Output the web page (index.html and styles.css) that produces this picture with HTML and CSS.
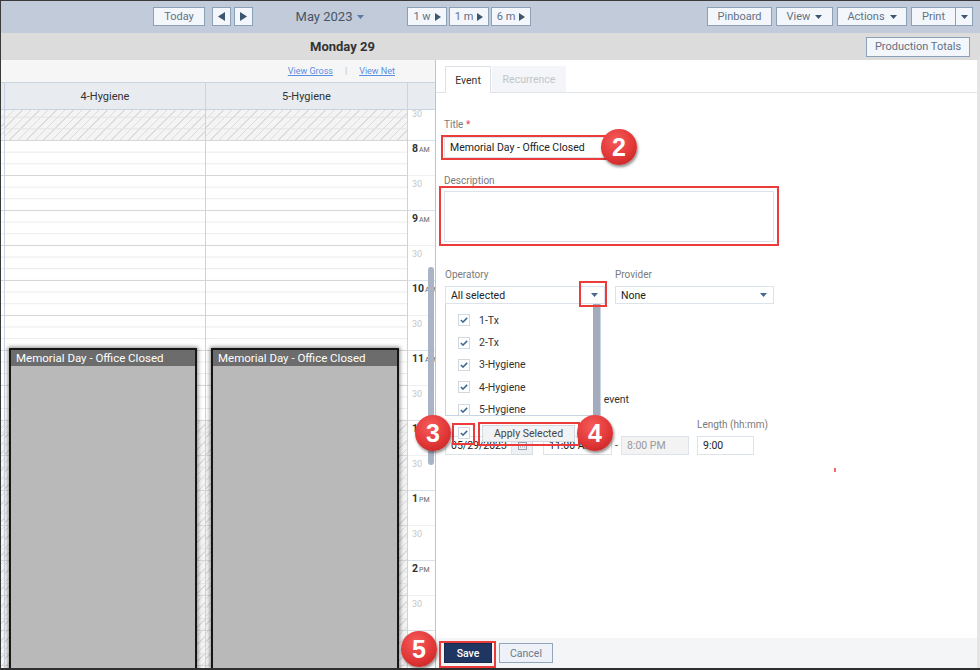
FILE: index.html
```html
<!DOCTYPE html>
<html>
<head>
  <meta charset="utf-8">
  <title>Schedule - Edit Event</title>
  <link rel="stylesheet" href="styles.css">
</head>
<body>
<div class="app">
  <div class="toolbar">
    <button type="button" class="btn today">Today</button>
    <button type="button" class="btn arrow prev"><svg width="7" height="9" viewBox="0 0 7 9"><path d="M7 0V9L0 4.5Z" fill="#3d5670"/></svg></button>
    <button type="button" class="btn arrow next"><svg width="7" height="9" viewBox="0 0 7 9"><path d="M0 0V9L7 4.5Z" fill="#3d5670"/></svg></button>
    <div class="month">May 2023 <svg width="7" height="4" viewBox="0 0 7 4"><path d="M0 0H7L3.5 4Z" fill="#5a7aa5"/></svg></div>
    <button type="button" class="btn range">1 w <svg width="6" height="8" viewBox="0 0 6 8"><path d="M0 0V8L6 4Z" fill="#3d5670"/></svg></button>
    <button type="button" class="btn range">1 m <svg width="6" height="8" viewBox="0 0 6 8"><path d="M0 0V8L6 4Z" fill="#3d5670"/></svg></button>
    <button type="button" class="btn range">6 m <svg width="6" height="8" viewBox="0 0 6 8"><path d="M0 0V8L6 4Z" fill="#3d5670"/></svg></button>
    <div class="spacer"></div>
    <button type="button" class="btn pinboard">Pinboard</button>
    <button type="button" class="btn view">View <svg width="7" height="4" viewBox="0 0 7 4"><path d="M0 0H7L3.5 4Z" fill="#3d5670"/></svg></button>
    <button type="button" class="btn actions">Actions <svg width="7" height="4" viewBox="0 0 7 4"><path d="M0 0H7L3.5 4Z" fill="#3d5670"/></svg></button>
    <button type="button" class="btn print">Print</button>
    <button type="button" class="btn print-caret"><svg width="7" height="4" viewBox="0 0 7 4"><path d="M0 0H7L3.5 4Z" fill="#3d5670"/></svg></button>
  </div>

  <div class="dayrow">
    <div class="dayname">Monday 29</div>
    <div class="spacer"></div>
    <button type="button" class="btn totals">Production Totals</button>
  </div>

  <div class="main">
    <div class="calendar">
      <div class="links">
        <a href="#">View Gross</a>
        <span class="sep">|</span>
        <a href="#">View Net</a>
      </div>
      <div class="colheads">
        <div class="stub"></div>
        <div class="colhead c1">4-Hygiene</div>
        <div class="colhead c2">5-Hygiene</div>
        <div class="colhead timehead"></div>
      </div>
      <div class="grid">
        <div class="col stub">
          <div class="seg closed top"></div>
          <div class="seg open"></div>
          <div class="seg closed rest"></div>
        </div>
        <div class="col c1">
          <div class="seg closed top"></div>
          <div class="seg open"></div>
          <div class="seg closed rest"></div>
          <div class="event">
            <div class="event-title">Memorial Day - Office Closed</div>
          </div>
        </div>
        <div class="col c2">
          <div class="seg closed top"></div>
          <div class="seg open"></div>
          <div class="seg closed rest"></div>
          <div class="event">
            <div class="event-title">Memorial Day - Office Closed</div>
          </div>
        </div>
        <div class="times">
          <div class="tslots">
            <div class="tslot half"><span class="min">30</span></div>
            <div class="tslot hour"><b>8</b><small>AM</small></div>
            <div class="tslot half"><span class="min">30</span></div>
            <div class="tslot hour"><b>9</b><small>AM</small></div>
            <div class="tslot half"><span class="min">30</span></div>
            <div class="tslot hour"><b>10</b><small>AM</small></div>
            <div class="tslot half"><span class="min">30</span></div>
            <div class="tslot hour"><b>11</b><small>AM</small></div>
            <div class="tslot half"><span class="min">30</span></div>
            <div class="tslot hour"><b>12</b><small>PM</small></div>
            <div class="tslot half"><span class="min">30</span></div>
            <div class="tslot hour"><b>1</b><small>PM</small></div>
            <div class="tslot half"><span class="min">30</span></div>
            <div class="tslot hour"><b>2</b><small>PM</small></div>
            <div class="tslot half"><span class="min">30</span></div>
            <div class="tslot hour"><b>3</b><small>PM</small></div>
            <div class="tslot half"><span class="min">30</span></div>
          </div>
          <div class="tscroll"></div>
        </div>
      </div>
    </div>

    <div class="panel">
      <div class="tabs">
        <div class="tab active">Event</div>
        <div class="tab off">Recurrence</div>
      </div>

      <div class="form">
        <label class="label first">Title <span class="req">*</span></label>
        <div class="input title-input">Memorial Day - Office Closed</div>

        <label class="label desc-label">Description</label>
        <div class="input textarea"></div>

        <div class="pair">
          <div class="field op-field">
            <label class="label">Operatory</label>
            <div class="select-wrap">
              <div class="input select">All selected <svg width="7" height="4" viewBox="0 0 7 4"><path d="M0 0H7L3.5 4Z" fill="#45698f"/></svg></div>
              <div class="dropdown">
                <div class="ddlist">
                  <div class="items">
                    <div class="item"><span class="cb"><svg width="8" height="6" viewBox="0 0 8 6"><path d="M0.8 3L3 5.1L7.2 0.9" fill="none" stroke="#3b6a97" stroke-width="1.5"/></svg></span>1-Tx</div>
                    <div class="item"><span class="cb"><svg width="8" height="6" viewBox="0 0 8 6"><path d="M0.8 3L3 5.1L7.2 0.9" fill="none" stroke="#3b6a97" stroke-width="1.5"/></svg></span>2-Tx</div>
                    <div class="item"><span class="cb"><svg width="8" height="6" viewBox="0 0 8 6"><path d="M0.8 3L3 5.1L7.2 0.9" fill="none" stroke="#3b6a97" stroke-width="1.5"/></svg></span>3-Hygiene</div>
                    <div class="item"><span class="cb"><svg width="8" height="6" viewBox="0 0 8 6"><path d="M0.8 3L3 5.1L7.2 0.9" fill="none" stroke="#3b6a97" stroke-width="1.5"/></svg></span>4-Hygiene</div>
                    <div class="item"><span class="cb"><svg width="8" height="6" viewBox="0 0 8 6"><path d="M0.8 3L3 5.1L7.2 0.9" fill="none" stroke="#3b6a97" stroke-width="1.5"/></svg></span>5-Hygiene</div>
                  </div>
                  <div class="ddscroll"></div>
                </div>
                <div class="ddfoot">
                  <span class="cb"><svg width="8" height="6" viewBox="0 0 8 6"><path d="M0.8 3L3 5.1L7.2 0.9" fill="none" stroke="#3b6a97" stroke-width="1.5"/></svg></span>
                  <button type="button" class="apply">Apply Selected</button>
                </div>
              </div>
            </div>
          </div>
          <div class="field prov-field">
            <label class="label">Provider</label>
            <div class="input select">None <svg width="7" height="4" viewBox="0 0 7 4"><path d="M0 0H7L3.5 4Z" fill="#45698f"/></svg></div>
          </div>
        </div>

        <div class="allday">
          <span class="cb"></span>
          <span>Make this an all-day event</span>
        </div>

        <div class="when">
          <div class="fcol date-col">
            <div class="label">&nbsp;</div>
            <div class="date-group">
              <div class="input small date">05/29/2023</div>
              <div class="calbtn"><svg width="9" height="8" viewBox="0 0 9 8"><rect x="0.5" y="0.5" width="8" height="7" fill="none" stroke="#9aa3ad"/><path d="M2 3H3M4 3H5M6 3H7M2 5H3M4 5H5M6 5H7" stroke="#9aa3ad"/></svg></div>
            </div>
          </div>
          <div class="fcol start-col">
            <div class="label">&nbsp;</div>
            <div class="input small">11:00 AM</div>
          </div>
          <div class="fcol dash-col">
            <div class="label">&nbsp;</div>
            <div class="dash">-</div>
          </div>
          <div class="fcol end-col">
            <div class="label">&nbsp;</div>
            <div class="input small disabled">8:00 PM</div>
          </div>
          <div class="fcol len-col">
            <label class="label">Length (hh:mm)</label>
            <div class="input small">9:00</div>
          </div>
        </div>
      </div>

      <div class="footer">
        <button type="button" class="save">Save</button>
        <button type="button" class="cancel">Cancel</button>
      </div>
    </div>
  </div>

  <!-- screenshot callouts -->
  <div class="annot a-title"></div>
  <div class="annot a-desc"></div>
  <div class="annot a-caret"></div>
  <div class="annot a-all"></div>
  <div class="annot a-apply"></div>
  <div class="annot a-save"></div>
  <div class="mark"></div>
  <div class="badge b2">2</div>
  <div class="badge b3">3</div>
  <div class="badge b4">4</div>
  <div class="badge b5">5</div>
</div>
</body>
</html>
```

FILE: styles.css
```css
html, body {
  margin: 0;
  padding: 0;
}
body {
  width: 980px;
  height: 670px;
  overflow: hidden;
  background: #fff;
  color: #333;
  font-family: Roboto, 'Liberation Sans', sans-serif;
}
.app {
  position: relative;
  width: 980px;
  height: 670px;
  overflow: hidden;
  background: #2e2e2e;
}
/* window frame */
.app::after {
  content: "";
  position: absolute;
  top: 0; left: 0; right: 0; bottom: 0;
  border-top: 1px solid #3a3a3a;
  border-left: 1px solid #3a3a3a;
  border-bottom: 2px solid #2e2e2e;
  pointer-events: none;
  z-index: 20;
}
.spacer {
  flex: 1;
}
.btn {
  box-sizing: border-box;
  height: 19px;
  padding: 0;
  border: 1px solid #8aa1b7;
  background: #f3f6fb;
  color: #627284;
  font-family: inherit;
  font-size: 11px;
  display: inline-flex;
  align-items: center;
  justify-content: center;
  gap: 5px;
}

/* Top toolbar */
.toolbar {
  display: flex;
  align-items: center;
  height: 33px;
  background: #c2cbda;
}
.today { width: 52px; margin-left: 153px; }
.arrow { width: 19px; }
.prev { margin-left: 7px; }
.next { margin-left: 3px; }
.month {
  width: 154px;
  display: flex;
  justify-content: center;
  align-items: center;
  gap: 5px;
  font-size: 13px;
  color: #465566;
}
.range { width: 40px; gap: 4px; }
.range + .range { margin-left: 2px; }
.pinboard { width: 65px; }
.view { width: 57px; margin-left: 4px; }
.actions { width: 70px; margin-left: 4px; }
.print { width: 45px; margin-left: 4px; }
.print-caret { width: 18px; margin-left: -1px; margin-right: 7px; }

.dayrow {
  display: flex;
  align-items: center;
  height: 27px;
  background: #dcdcdc;
}
.dayname {
  padding-left: 310px;
  font-size: 13px;
  font-weight: bold;
  color: #333;
}
.totals { width: 104px; height: 20px; margin-right: 10px; }

.main {
  display: flex;
  height: 608px;
  background: #fff;
}

/* Calendar */
.calendar {
  width: 435px;
  flex: none;
  display: flex;
  flex-direction: column;
}
.links {
  box-sizing: border-box;
  height: 22px;
  display: flex;
  justify-content: flex-end;
  align-items: center;
  gap: 12px;
  padding-right: 40px;
  background: #f6f6f6;
  font-size: 9px;
}
.links a {
  color: #5b8de0;
}
.links .sep {
  color: #bbb;
}
.colheads {
  box-sizing: border-box;
  height: 28px;
  display: flex;
  background: #e8ecf1;
  border-top: 1px solid #c8d4e0;
  border-bottom: 1px solid #c8d4e0;
}
.stub { width: 4px; flex: none; }
.c1 { width: 201px; flex: none; }
.c2 { width: 202px; flex: none; }
.colhead {
  box-sizing: border-box;
  border-left: 1px solid #c8d4e0;
  display: flex;
  align-items: center;
  justify-content: center;
  font-size: 11px;
  color: #333;
}
.timehead { width: 28px; flex: none; }

.grid {
  flex: 1;
  display: flex;
  overflow: hidden;
}
.col {
  box-sizing: border-box;
  position: relative;
  display: flex;
  flex-direction: column;
}
.col.c1, .col.c2 {
  border-left: 1px solid #c8d4e0;
}
.seg {
  background:
    linear-gradient(#d7d7d7 1px, transparent 1px) 0 0 / 100% 35px,
    linear-gradient(#ebebeb 1px, transparent 1px) 0 0 / 100% 11.6667px,
    #fff;
}
.seg.closed {
  background:
    linear-gradient(#d7d7d7 1px, transparent 1px) 0 0 / 100% 35px,
    linear-gradient(#e4e4e4 1px, transparent 1px) 0 0 / 100% 11.6667px,
    repeating-linear-gradient(135deg, #dcdcdc 0 1px, #f4f4f4 1px 6px);
}
.seg.top {
  height: 30px;
  flex: none;
  background-position: 0 30px, 0 30px, 0 0;
}
.seg.open {
  height: 280px;
  flex: none;
}
.seg.rest {
  flex: 1;
}
.event {
  position: absolute;
  top: 238px;
  bottom: -20px;
  width: 188px;
  box-sizing: border-box;
  border: 2px solid #161616;
  background: #b9b9b9;
  box-shadow: 0 0 4px 1px rgba(0, 0, 0, 0.45);
}
.c1 .event { left: 4px; }
.c2 .event { left: 5px; }
.event-title {
  height: 16px;
  line-height: 16px;
  padding-left: 5px;
  background: #6c6c6c;
  color: #fff;
  font-size: 11.5px;
  white-space: nowrap;
}

.times {
  width: 28px;
  flex: none;
  box-sizing: border-box;
  position: relative;
  border-left: 1px solid #c8d4e0;
  overflow: hidden;
}
.tslots {
  margin-top: -5px;
}
.tslot {
  box-sizing: border-box;
  height: 35px;
  padding: 0 0 0 4px;
  line-height: 11px;
  white-space: nowrap;
}
.tslot.hour {
  border-top: 1px solid #d9e1ea;
}
.tslot.half {
  border-top: 1px solid #f0f0f0;
}
.tslot b {
  font-size: 10.5px;
  color: #333;
}
.tslot small {
  font-size: 7px;
  color: #666;
  margin-left: 1px;
}
.tslot .min {
  font-size: 9px;
  color: #c6c6c6;
}
.tscroll {
  position: absolute;
  left: 20px;
  top: 157px;
  width: 6px;
  height: 198px;
  border-radius: 3px;
  background: #a9b4c7;
}

/* Event panel */
.panel {
  flex: 1;
  box-sizing: border-box;
  display: flex;
  flex-direction: column;
  border-left: 1px solid #c3c3c3;
  border-right: 3px solid #e4e4e4;
  background: #fff;
}
.tabs {
  box-sizing: border-box;
  height: 33px;
  display: flex;
  align-items: flex-end;
  padding-left: 9px;
  border-bottom: 1px solid #e1e5ea;
}
.tab {
  box-sizing: border-box;
  display: flex;
  align-items: center;
  justify-content: center;
  font-size: 10.5px;
}
.tab.active {
  width: 46px;
  height: 27px;
  margin-bottom: -1px;
  border: 1px solid #dde2e8;
  border-bottom: none;
  background: #fff;
  color: #333;
}
.tab.off {
  width: 74px;
  height: 26px;
  margin-left: 1px;
  background: #f3f5f8;
  color: #c2c5ca;
}
.form {
  flex: 1;
  padding-left: 8px;
}
.label {
  display: block;
  font-size: 10px;
  line-height: 12px;
  color: #7a7a7a;
  white-space: nowrap;
}
.label.first { margin-top: 26px; }
.req { color: #e04040; }
.input {
  box-sizing: border-box;
  display: flex;
  align-items: center;
  height: 21px;
  padding-left: 5px;
  border: 1px solid #dce3ea;
  background: #fff;
  font-size: 10.5px;
  color: #222;
  white-space: nowrap;
}
.title-input {
  width: 161px;
  margin-top: 6px;
}
.desc-label { margin-top: 17px; }
.textarea {
  width: 330px;
  height: 51px;
  margin-top: 4px;
}
.pair {
  display: flex;
  gap: 10px;
  margin-top: 27px;
  margin-left: 1px;
}
.op-field { width: 160px; }
.prov-field { width: 159px; }
.select {
  height: 18px;
  margin-top: 5px;
  justify-content: space-between;
  padding-right: 6px;
}
.select-wrap {
  position: relative;
}
.dropdown {
  position: absolute;
  top: 100%;
  left: 0;
  width: 156px;
  z-index: 5;
}
.ddlist {
  display: flex;
  height: 112px;
  box-sizing: border-box;
  border: 1px solid #c6d4e4;
  border-top: none;
  background: #fff;
}
.items {
  flex: 1;
  padding-top: 5px;
}
.item {
  display: flex;
  align-items: center;
  gap: 9px;
  height: 22.4px;
  padding-left: 12px;
  font-size: 10.5px;
  color: #333;
}
.ddscroll {
  width: 7px;
  background: #a3abbd;
}
.cb {
  box-sizing: border-box;
  width: 12px;
  height: 12px;
  flex: none;
  display: inline-flex;
  align-items: center;
  justify-content: center;
  border: 1px solid #d0d8e2;
  background: #fff;
}
.ddfoot {
  display: flex;
  align-items: center;
  height: 22px;
  margin-top: 6px;
  padding-left: 13px;
}
.apply {
  box-sizing: border-box;
  width: 93px;
  height: 17px;
  margin-left: 12px;
  padding: 0;
  border: 1px solid #d3d9e0;
  background: #f1f3f5;
  color: #444;
  font-family: inherit;
  font-size: 10.5px;
}
.allday {
  width: 185px;
  display: flex;
  justify-content: flex-end;
  align-items: center;
  gap: 6px;
  height: 14px;
  margin-top: 88px;
  font-size: 10.5px;
  color: #333;
  white-space: nowrap;
}
.when {
  display: flex;
  margin-top: 13px;
  margin-left: 1px;
}
.fcol .input.small {
  height: 19px;
  margin-top: 5px;
}
.date-col { width: 88px; }
.date-group {
  display: flex;
}
.date-group .date { width: 67px; }
.calbtn {
  box-sizing: border-box;
  width: 21px;
  height: 19px;
  margin-top: 5px;
  display: flex;
  align-items: center;
  justify-content: center;
  border: 1px solid #d6dce3;
  border-left: none;
  background: #eef0f3;
}
.start-col { width: 69px; margin-left: 10px; }
.dash-col { width: 9px; }
.dash {
  height: 19px;
  margin-top: 5px;
  line-height: 19px;
  text-align: center;
  font-size: 10.5px;
}
.end-col { width: 68px; }
.input.disabled {
  background: #f3f3f3;
  color: #999;
}
.len-col { width: 57px; margin-left: 8px; }
.footer {
  height: 30px;
  display: flex;
  align-items: center;
  gap: 7px;
  padding-left: 8px;
  background: #f4f5f7;
}
.save, .cancel {
  box-sizing: border-box;
  height: 20px;
  padding: 0;
  font-family: inherit;
  font-size: 10.5px;
}
.save {
  width: 48px;
  border: 1px solid #17294c;
  background: #1f3663;
  color: #fff;
  font-weight: 500;
}
.cancel {
  width: 54px;
  border: 1px solid #8fa6bc;
  background: #eef2f8;
  color: #6b7a8a;
}

/* Callouts drawn over the screenshot */
.annot {
  position: absolute;
  box-sizing: border-box;
  border: 2px solid #ec3b3b;
  z-index: 10;
}
.a-title { left: 441px; top: 135px; width: 168px; height: 25px; }
.a-desc { left: 439px; top: 186px; width: 340px; height: 60px; }
.a-caret { left: 579px; top: 281px; width: 28px; height: 26px; }
.a-all { left: 452px; top: 423px; width: 23px; height: 22px; }
.a-apply { left: 478px; top: 422px; width: 102px; height: 24px; }
.a-save { left: 439px; top: 641px; width: 57px; height: 27px; }
.mark {
  position: absolute;
  left: 834px;
  top: 468px;
  width: 2px;
  height: 4px;
  background: #f06a6a;
}
.badge {
  position: absolute;
  width: 36px;
  height: 36px;
  border-radius: 50%;
  display: flex;
  align-items: center;
  justify-content: center;
  background: radial-gradient(circle at 42% 32%, #f75b5b 0%, #e13737 55%, #b91f1f 100%);
  box-shadow: 1px 2px 3px rgba(0, 0, 0, 0.45);
  color: #fff;
  font-family: 'Liberation Sans', Arial, sans-serif;
  font-weight: bold;
  font-size: 25px;
  z-index: 11;
}
.b2 { left: 601px; top: 129px; }
.b3 { left: 415px; top: 415px; }
.b4 { left: 577px; top: 415px; }
.b5 { left: 401px; top: 631px; }
```
